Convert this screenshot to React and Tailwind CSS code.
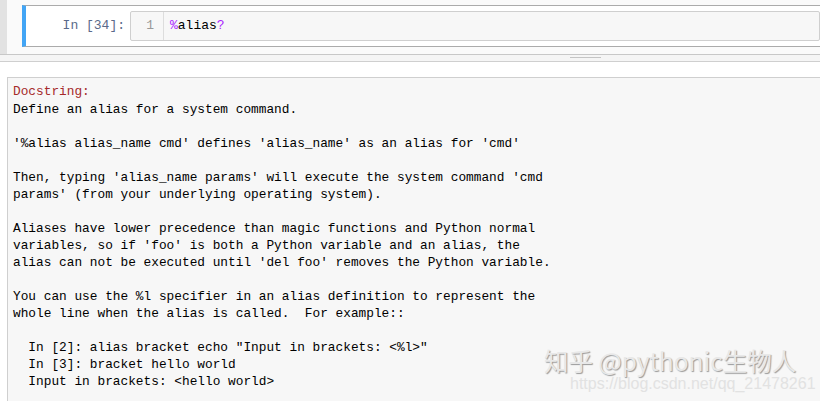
const mono = { fontFamily: '"Liberation Mono", "DejaVu Sans Mono", monospace' };

const docLines = [
  "Define an alias for a system command.",
  "",
  "'%alias alias_name cmd' defines 'alias_name' as an alias for 'cmd'",
  "",
  "Then, typing 'alias_name params' will execute the system command 'cmd",
  "params' (from your underlying operating system).",
  "",
  "Aliases have lower precedence than magic functions and Python normal",
  "variables, so if 'foo' is both a Python variable and an alias, the",
  "alias can not be executed until 'del foo' removes the Python variable.",
  "",
  "You can use the %l specifier in an alias definition to represent the",
  "whole line when the alias is called.  For example::",
  "",
  "  In [2]: alias bracket echo \"Input in brackets: <%l>\"",
  "  In [3]: bracket hello world",
  "  Input in brackets: <hello world>",
];

const App = () => {
  return (
    <div className="relative w-[820px] h-[401px] overflow-hidden bg-white">
      {/* notebook area */}
      <div className="flex h-[55px] bg-[#e2e2e2] border-b border-[#c8c8c8]">
        <div className="w-[7px] shrink-0" />
        <div className="flex-1 bg-[#fafafa] pl-[15px] pt-[5px]">
          <div className="flex h-[42px] bg-white border-l-4 border-[#42a5f5] border-t border-b border-t-[#ababab] border-b-[#ababab]">
            <div className="flex-1 flex items-start pt-[5px]">
              <div
                className="w-[104px] shrink-0 text-right pr-[5px] text-[13px] leading-[29px] text-[#5a6a8a]"
                style={mono}
              >
                In [34]:
              </div>
              <div className="flex-1 flex h-[30px] bg-[#f7f7f7] border border-[#cfcfcf] rounded-[2px]">
                <div
                  className="w-[33px] shrink-0 border-r border-[#dddddd] text-right pr-[9px] text-[13px] leading-[28px] text-[#999999]"
                  style={mono}
                >
                  1
                </div>
                <div className="pl-[6px] text-[13px] leading-[28px] text-black" style={mono}>
                  <span className="text-[#aa22ff]">%</span>alias
                  <span className="text-[#aa22ff]">?</span>
                </div>
              </div>
            </div>
          </div>
        </div>
      </div>

      {/* pager divider */}
      <div className="relative h-[7px] bg-[#f5f5f5] border-b border-[#cfcfcf]">
        <div className="absolute left-[570px] top-[2px] w-[31px] h-px bg-[#c4c4c4]" />
      </div>

      <div className="h-[15px] bg-white" />

      {/* pager */}
      <div className="ml-[7px] h-[330px] bg-[#f7f7f7] border-t border-l border-[#cfcfcf] pl-[5px] pt-[5px]">
        <pre className="text-[12.8px] leading-[17px] text-black m-0" style={mono}>
          <span className="text-[#a52a2a]">Docstring:</span>
          {"\n"}
          <span className="relative top-[1px]">{docLines.join("\n")}</span>
        </pre>
      </div>

      {/* watermark */}
      <div className="absolute left-[544px] top-[348px] flex flex-col">
        <div
          className="text-[24.5px] leading-[25px] text-[#e8e8e8] whitespace-nowrap"
          style={{
            fontFamily: '"Noto Sans CJK SC", "Noto Sans", sans-serif',
            textShadow: "1px 1px 1px #9a9a9a",
          }}
        >
          知乎 @pythonic生物人
        </div>
        <div
          className="ml-[26px] mt-[3px] text-[16px] leading-[16px] text-[#e2e2e2] whitespace-nowrap"
          style={{ fontFamily: '"Liberation Sans", Arial, sans-serif' }}
        >
          https://blog.csdn.net/qq_21478261
        </div>
      </div>
    </div>
  );
};

export default App;
